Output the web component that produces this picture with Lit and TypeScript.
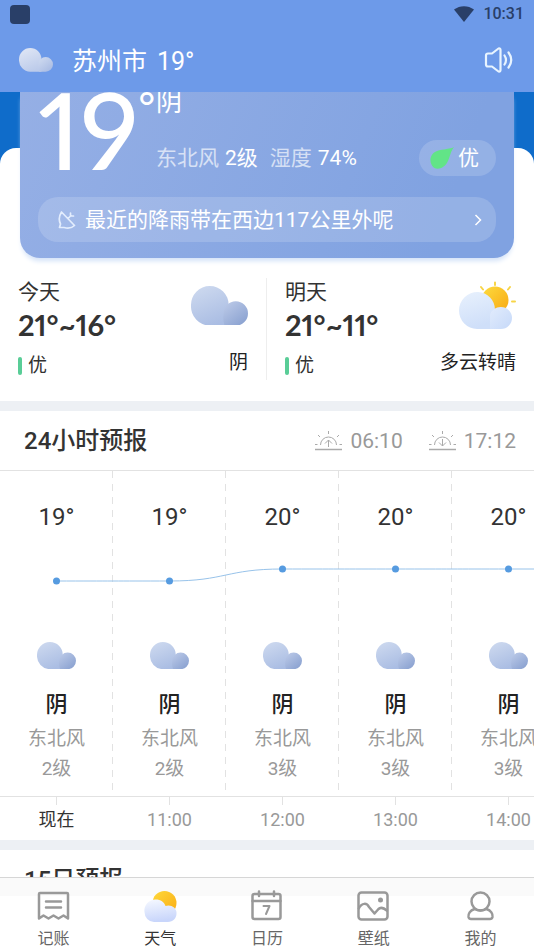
import { LitElement, html, css, svg } from "lit";
import { customElement, property } from "lit/decorators.js";
import { classMap } from "lit/directives/class-map.js";

interface Hour {
  time: string;
  temp: number;
  wind: string;
  level: string;
  sky: string;
}

const HOURS: Hour[] = [
  { time: "现在", temp: 19, wind: "东北风", level: "2级", sky: "阴" },
  { time: "11:00", temp: 19, wind: "东北风", level: "2级", sky: "阴" },
  { time: "12:00", temp: 20, wind: "东北风", level: "3级", sky: "阴" },
  { time: "13:00", temp: 20, wind: "东北风", level: "3级", sky: "阴" },
  { time: "14:00", temp: 20, wind: "东北风", level: "3级", sky: "阴" },
];

const COLUMN = 113;

/** Weather pictogram: overcast cloud, or cloud with the sun behind it. */
@customElement("sky-icon")
export class SkyIcon extends LitElement {
  @property() kind: "cloud" | "pale" | "sunny" | "tab" = "cloud";

  static styles = css`
    :host {
      display: flex;
      flex: none;
      align-items: center;
    }
    svg {
      display: block;
      width: 100%;
      height: auto;
    }
  `;

  private cloud(top: string, bottom: string, puffTop: string, puffBottom: string) {
    return html`<svg viewBox="0 0 56 39" aria-hidden="true">
      <defs>
        <linearGradient id="a" x1="0.2" y1="0" x2="0.6" y2="1">
          <stop offset="0" stop-color=${top} />
          <stop offset="1" stop-color=${bottom} />
        </linearGradient>
        <linearGradient id="b" x1="0.1" y1="0" x2="0.9" y2="1">
          <stop offset="0" stop-color=${puffTop} />
          <stop offset="1" stop-color=${puffBottom} />
        </linearGradient>
      </defs>
      <path fill="url(#a)" d="M18.500 0A18.500 18.500 0 0 1 37 18.500V39H18.500A19 19 0 0 1 0 19A18.500 18.500 0 0 1 18.500 0Z" />
      <path fill="url(#b)" d="M32 27A12 12 0 1 1 44 39H33Q31 33 32 27Z" />
    </svg>`;
  }

  render() {
    if (this.kind === "cloud") return this.cloud("#cdd9ef", "#aabde3", "#bccae8", "#879fcf");
    if (this.kind === "pale") return this.cloud("#dfe6f5", "#bccbea", "#d0dbf0", "#a6b9e2");
    if (this.kind === "tab") {
      return html`<svg viewBox="0 0 33 31" aria-hidden="true">
        <defs>
          <linearGradient id="s" x1="0" y1="0" x2="1" y2="1">
            <stop offset="0" stop-color="#ffd93a" />
            <stop offset="1" stop-color="#f9ab14" />
          </linearGradient>
          <linearGradient id="c" x1="0" y1="0" x2="0.2" y2="1">
            <stop offset="0" stop-color="#f6f9ff" />
            <stop offset="1" stop-color="#c9d6fb" />
          </linearGradient>
        </defs>
        <circle cx="20.500" cy="12" r="12" fill="url(#s)" />
        <path fill="url(#c)" d="M10 31A10 10 0 0 1 .5 21A11 11 0 0 1 11.500 8.500C17 8.500 20 11 21.500 15C27 13 33 17 32.500 22.500C32.500 27 29 31 24 31Z" />
      </svg>`;
    }
    return html`<svg viewBox="0 0 57 49" aria-hidden="true">
      <defs>
        <linearGradient id="s" x1="0" y1="0" x2="1" y2="1">
          <stop offset="0" stop-color="#fddc3f" />
          <stop offset="1" stop-color="#f8a812" />
        </linearGradient>
        <linearGradient id="c" x1="0" y1="0" x2="0.3" y2="1">
          <stop offset="0" stop-color="#e8f1fd" />
          <stop offset="1" stop-color="#cfdff9" />
        </linearGradient>
        <linearGradient id="d" x1="0" y1="0" x2="1" y2="1">
          <stop offset="0" stop-color="#e2ecfc" />
          <stop offset="1" stop-color="#c6d9f9" />
        </linearGradient>
      </defs>
      <circle cx="36" cy="19" r="13.500" fill="url(#s)" />
      <path stroke="#f7d548" stroke-width="2" stroke-linecap="round" d="M36 1.500V4M22 6l2 2.500M51 6l-2 2.500M53 20.500h3" />
      <path fill="url(#c)" d="M19 11A18 18 0 0 1 36 29V48H18A18.500 18.500 0 0 1 0 29.500A18.500 18.500 0 0 1 19 11Z" />
      <path fill="url(#d)" d="M31 34A11 11 0 0 1 42 26A11 11 0 0 1 42 48H31Z" />
    </svg>`;
  }
}

@customElement("app-root")
export class AppRoot extends LitElement {
  static styles = css`
    :host {
      display: flex;
      flex-direction: column;
      height: 100vh;
      overflow: hidden;
      background: #fff;
      color: #333;
      font-family: Roboto, "Noto Sans CJK SC", sans-serif;
      font-size: 21px;
      line-height: 28px;
    }
    * {
      box-sizing: border-box;
    }
    h2, p, ul, dl, dd {
      margin: 0;
      padding: 0;
      font-weight: 400;
    }
    ul {
      list-style: none;
    }
    svg {
      display: block;
      flex: none;
    }
    button {
      border: 0;
      padding: 0;
      background: none;
      color: inherit;
      font: inherit;
      cursor: pointer;
    }

    .top {
      flex: none;
      background: #6d9ae9;
      color: #fff;
    }
    .status {
      display: flex;
      align-items: center;
      gap: 9px;
      height: 28px;
      padding: 0 10px;
      color: #293f68;
      font-size: 16px;
      font-weight: 500;
    }
    .chip {
      width: 20px;
      height: 19px;
      margin-right: auto;
      border-radius: 4px;
      background: #293f68;
    }
    .place {
      display: flex;
      align-items: center;
      height: 64px;
      padding: 0 20px 0 19px;
      font-size: 25px;
      line-height: 32px;
    }
    .place p {
      display: flex;
      gap: 10px;
      padding-top: 3px;
    }
    .place sky-icon {
      width: 34px;
      margin-right: 19px;
    }
    .place button {
      margin-left: auto;
    }

    main {
      flex: 1;
      min-height: 0;
      overflow: hidden auto;
      scrollbar-width: none;
    }

    .hero {
      position: relative;
      padding: 0 20px 12px;
      background: #0f6cca;
    }
    .hero::before {
      content: "";
      position: absolute;
      inset: 56px 0 0;
      border-radius: 16px 16px 0 0;
      background: #fff;
    }
    .card {
      position: relative;
      display: flex;
      flex-direction: column;
      justify-content: flex-end;
      gap: 21px;
      height: 166px;
      padding: 0 18px 16px;
      border-radius: 0 0 20px 20px;
      background: linear-gradient(110deg, #95afe5, #80a2e1 85%);
      box-shadow: 0 5px 5px -2px #d3e2f8;
      color: #fff;
    }
    .now {
      display: flex;
      align-items: flex-end;
      height: 104px;
    }
    .big {
      display: flex;
      width: 118px;
      font: 500 106px/94px Lato, sans-serif;
      font-variant-numeric: proportional-nums;
    }
    .big sup {
      font-size: 40px;
      line-height: 48px;
    }
    .facts {
      display: flex;
      flex-direction: column;
      gap: 28px;
      padding-bottom: 4px;
    }
    .sky {
      font-size: 26px;
    }
    .facts dl {
      display: flex;
      gap: 12px;
    }
    .facts dl div {
      display: flex;
      gap: 6px;
    }
    dt {
      opacity: 0.65;
    }
    .air {
      display: flex;
      align-items: center;
      gap: 4px;
      height: 36px;
      margin-left: auto;
      padding: 0 17px 0 11px;
      border-radius: 18px;
      background: rgb(255 255 255 / 16%);
    }
    .rain {
      display: flex;
      flex: none;
      align-items: center;
      gap: 9px;
      height: 45px;
      padding: 0 14px 0 20px;
      border-radius: 20px;
      background: rgb(255 255 255 / 16%);
    }
    .rain svg:last-child {
      margin-left: auto;
    }

    .days {
      display: grid;
      grid-template-columns: 1fr 1fr;
      padding: 8px 0 21px;
    }
    .day {
      display: flex;
      justify-content: space-between;
      padding: 0 18px;
    }
    .day:first-child {
      border-right: 1px solid #eee;
    }
    .day .range {
      margin: 1px 0 9px;
      font: 700 29px/36px Lato, sans-serif;
      font-variant-numeric: proportional-nums;
    }
    .level {
      display: flex;
      align-items: center;
      gap: 6px;
      font-size: 19px;
    }
    .level::before {
      content: "";
      width: 4px;
      height: 18px;
      border-radius: 2px;
      background: #59cd97;
    }
    .outlook {
      display: flex;
      flex-direction: column;
      align-items: flex-end;
      justify-content: space-between;
      padding: 3px 0;
      font-size: 19px;
      font-weight: 500;
      color: #222;
    }
    .outlook sky-icon {
      width: 57px;
      height: 49px;
    }

    .block {
      border-top: 10px solid #edf0f4;
    }
    .heading {
      display: flex;
      align-items: center;
      height: 60px;
      padding: 0 18px 0 24px;
      border-bottom: 1px solid #e2e2e2;
      color: #999;
    }
    h2 {
      margin-right: auto;
      color: #333;
      font-size: 24px;
      font-weight: 500;
    }
    .sun {
      display: flex;
      align-items: center;
      gap: 8px;
      margin-left: 26px;
    }

    .hours {
      position: relative;
      overflow: auto hidden;
      scrollbar-width: none;
    }
    .hours ul {
      display: grid;
      grid-auto-flow: column;
      grid-auto-columns: 113px;
    }
    .hour {
      display: flex;
      flex-direction: column;
      align-items: center;
      text-align: center;
      color: #999;
      font-size: 19px;
    }
    .slot {
      display: flex;
      flex-direction: column;
      align-items: center;
      width: 100%;
      height: 326px;
      padding-top: 32px;
      border-bottom: 1px solid #e2e2e2;
      background: repeating-linear-gradient(#e2e2e2 0 7px, transparent 7px 13px) right top / 1px 100% no-repeat;
    }
    .temp {
      margin-bottom: 111px;
      color: #333;
      font-size: 24px;
    }
    .slot sky-icon {
      width: 39px;
      margin-bottom: 22px;
    }
    .slot .kind {
      margin-bottom: 6px;
      color: #222;
      font-size: 22px;
      font-weight: 500;
    }
    .slot .wind {
      margin-bottom: 2px;
    }
    .hour time {
      display: flex;
      flex-direction: column;
      align-items: center;
      height: 43px;
      font-size: 18px;
      line-height: 30px;
    }
    .hour time::before {
      content: "";
      width: 1px;
      height: 8px;
      background: #e2e2e2;
    }
    .hour.current time {
      color: #333;
    }
    .chart {
      position: absolute;
      top: 90px;
      left: 0;
    }

    nav {
      display: grid;
      flex: none;
      grid-template-columns: repeat(5, 1fr);
      height: 72px;
      border-top: 1px solid #d6d6d6;
      background: linear-gradient(#fafafa 18px, #fff 18px);
      font-size: 16px;
      line-height: 24px;
    }
    nav a {
      display: flex;
      flex-direction: column;
      align-items: center;
      gap: 5px;
      padding-top: 12px;
      color: #666;
      text-decoration: none;
    }
    nav a.active {
      color: #333;
    }
    nav sky-icon,
    nav svg {
      width: 33px;
      height: 32px;
    }
  `;

  private chart() {
    const points = HOURS.map((h, i) => ({ x: COLUMN / 2 + COLUMN * i, y: h.temp > 19 ? 8 : 20 }));
    let d = `M${points[0].x} ${points[0].y}`;
    for (let i = 1; i < points.length; i++) {
      const a = points[i - 1];
      const b = points[i];
      const mid = (a.x + b.x) / 2;
      d += `C${mid} ${a.y} ${mid} ${b.y} ${b.x} ${b.y}`;
    }
    const end = points[points.length - 1];
    d += `H${end.x + COLUMN / 2}`;
    return html`<svg class="chart" width=${COLUMN * HOURS.length} height="30" aria-hidden="true">
      <path d=${d} fill="none" stroke="#98c3ea" />
      ${points.map((p) => svg`<circle cx=${p.x} cy=${p.y} r="3.500" fill="#569be0" />`)}
    </svg>`;
  }

  private sun(label: string, time: string, arrow: string) {
    return html`<div class="sun">
      <svg width="27" height="21" viewBox="0 0 27 21" fill="none" stroke="#aaa" role="img" aria-label=${label}>
        <path stroke-width="1.500" d="M0 19.500H27" />
        <path d="M5.500 15A8 8 0 0 1 21.500 15M13.500 1V4M3 5l2 2M24 5l-2 2M0 14.500h2.500M24.500 14.500H27" />
        <path d=${arrow} />
      </svg>
      <span>${time}</span>
    </div>`;
  }

  private day(name: string, range: string, kind: string, sky: string) {
    return html`<section class="day">
      <div>
        <p>${name}</p>
        <p class="range">${range}</p>
        <p class="level">优</p>
      </div>
      <div class="outlook">
        <sky-icon kind=${kind}></sky-icon>
        <p>${sky}</p>
      </div>
    </section>`;
  }

  render() {
    return html`
      <header class="top">
        <div class="status">
          <span class="chip"></span>
          <svg width="20" height="16" viewBox="0 0 20 16" aria-hidden="true">
            <path fill="#293f68" d="M0 3.500C6-1 14-1 20 3.500L10 16Z" />
          </svg>
          <span>10:31</span>
        </div>
        <div class="place">
          <sky-icon kind="pale"></sky-icon>
          <p><span>苏州市</span><span>19°</span></p>
          <button aria-label="语音播报">
            <svg width="30" height="28" viewBox="0 0 30 28" fill="none" stroke="#e8f4ff" stroke-width="2.200" stroke-linecap="round" stroke-linejoin="round" aria-hidden="true">
              <path d="M4 7.500H8L14.500 2.500Q16.500 2 16.500 4V24Q16.500 26 14.500 25.500L8 20.500H4Q2 20.500 2 18.500V9.500Q2 7.500 4 7.500ZM20.500 9.500Q23.500 14 20.500 18.500M24.500 6.500Q30 14 24.500 21.500" />
            </svg>
          </button>
        </div>
      </header>

      <main>
        <div class="hero">
          <div class="card">
            <div class="now">
              <div class="big"><span>19</span><sup>°</sup></div>
              <div class="facts">
                <p class="sky">阴</p>
                <dl>
                  <div><dt>东北风</dt><dd>2级</dd></div>
                  <div><dt>湿度</dt><dd>74%</dd></div>
                </dl>
              </div>
              <button class="air">
                <svg width="24" height="22" viewBox="0 0 24 22" aria-hidden="true">
                  <path fill="#62e487" d="M24 0C21 2 13 2 7 4C1 6-1 13 1.500 17.500C3 22 9 23 13 20C20 16 19 6 24 0Z" />
                </svg>
                优
              </button>
            </div>
            <button class="rain">
              <svg width="18" height="19" viewBox="0 0 18 19" fill="none" stroke="#e3edfd" stroke-width="1.700" stroke-linecap="round" stroke-linejoin="round" aria-hidden="true">
                <path d="M3.500 2C1 6 1 11 2.500 14L1.500 17.500H6C10 18.500 14 18 16.500 15.500Z M10 8.500L13 5.500M12.500 3V6H15.500" />
              </svg>
              <span>最近的降雨带在西边117公里外呢</span>
              <svg width="8" height="12" viewBox="0 0 8 12" fill="none" stroke="#fff" stroke-width="1.500" aria-hidden="true">
                <path d="M1.500 1L6.500 6L1.500 11" />
              </svg>
            </button>
          </div>
        </div>

        <div class="days">
          ${this.day("今天", "21°~16°", "cloud", "阴")}
          ${this.day("明天", "21°~11°", "sunny", "多云转晴")}
        </div>

        <section class="block">
          <div class="heading">
            <h2>24小时预报</h2>
            ${this.sun("日出", "06:10", "M13.500 17V10M10 13.500L13.500 10L17 13.500")}
            ${this.sun("日落", "17:12", "M13.500 9V16M10 12.500L13.500 16L17 12.500")}
          </div>
          <div class="hours">
            <ul>
              ${HOURS.map(
                (h, i) => html`<li class=${classMap({ hour: true, current: i === 0 })}>
                  <div class="slot">
                    <p class="temp">${h.temp}°</p>
                    <sky-icon></sky-icon>
                    <p class="kind">${h.sky}</p>
                    <p class="wind">${h.wind}</p>
                    <p>${h.level}</p>
                  </div>
                  <time>${h.time}</time>
                </li>`
              )}
            </ul>
            ${this.chart()}
          </div>
        </section>

        <section class="block">
          <div class="heading"><h2>15日预报</h2></div>
        </section>
      </main>

      <nav>
        <a href="#bills">
          <svg viewBox="0 0 33 32" fill="none" stroke="#999" stroke-width="2.500" stroke-linejoin="round" stroke-linecap="round" aria-hidden="true">
            <path d="M2 28.500V4Q2 3 3 3H30Q31 3 31 4V28.500L26.500 25.500L21.500 28.500L16.500 25.500L11.500 28.500L6.500 25.500ZM9 11.500H24M9 17.500H24" />
          </svg>
          记账
        </a>
        <a href="#weather" class="active" aria-current="page">
          <sky-icon kind="tab"></sky-icon>
          天气
        </a>
        <a href="#calendar">
          <svg viewBox="0 0 33 32" fill="none" stroke="#999" stroke-width="2.500" stroke-linecap="round" stroke-linejoin="round" aria-hidden="true">
            <rect x="2.500" y="4" width="28" height="25" rx="2" />
            <path d="M2.500 11H30.500M9 1.500V6M24 1.500V6" />
            <path stroke-width="2" d="M13.500 16H19.500L16 24" />
          </svg>
          日历
        </a>
        <a href="#wallpaper">
          <svg viewBox="0 0 33 32" fill="none" stroke="#999" stroke-width="2.500" stroke-linejoin="round" aria-hidden="true">
            <rect x="1.500" y="2.500" width="29" height="27" rx="3" />
            <path d="M1.500 19C5 12 10 13 12 17L17.500 23.500L21.500 19Q24.500 16 30.500 21" />
            <circle cx="23.500" cy="10" r="2.500" fill="#999" stroke="none" />
          </svg>
          壁纸
        </a>
        <a href="#mine">
          <svg viewBox="0 0 33 32" fill="none" stroke="#999" stroke-width="2.500" stroke-linejoin="round" aria-hidden="true">
            <circle cx="16.500" cy="11.500" r="9" />
            <path d="M10.500 19C6 20.500 4 24 4.500 27Q5 29 7 29H26Q28 29 28.500 27C29 24 27 20.500 22.500 19Q16.500 22 10.500 19" />
          </svg>
          我的
        </a>
      </nav>
    `;
  }
}
